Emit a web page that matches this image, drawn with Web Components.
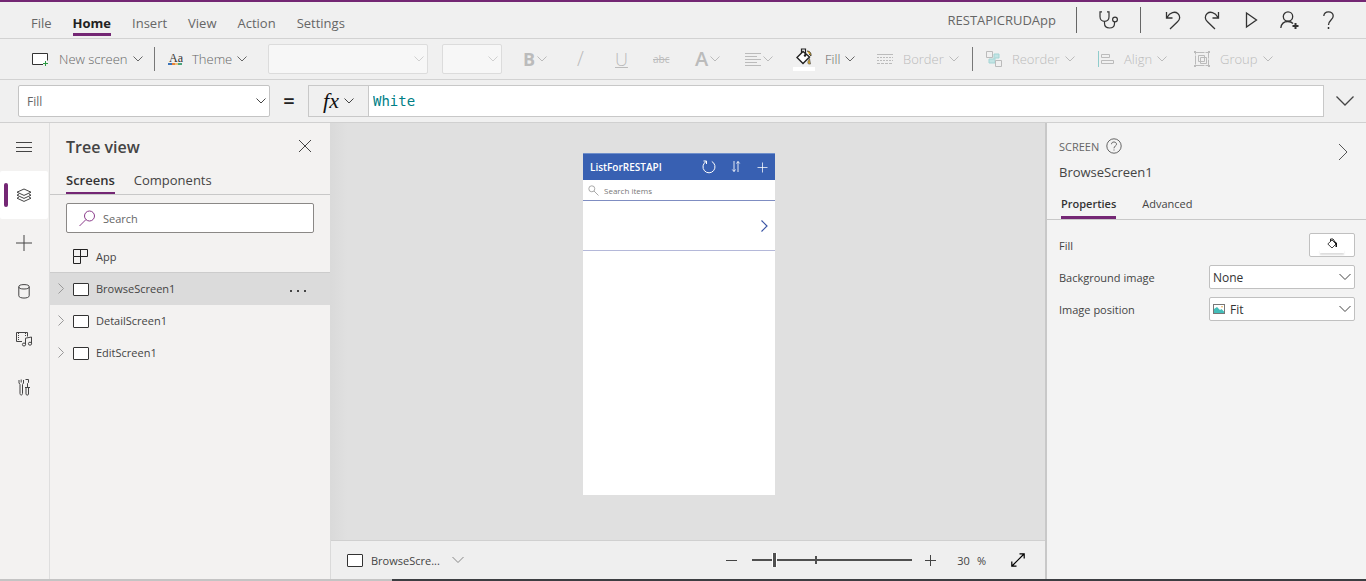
<!DOCTYPE html>
<html lang="en">
<head>
<meta charset="utf-8">
<title>RESTAPICRUDApp</title>
<style>
    body {
        margin: 0;
        font-family: "Open Sans", "Noto Sans", sans-serif;
        font-size: 12px;
        color: #444;
    }
</style>
</head>
<body>
<studio-app></studio-app>
<script>
const icons = {
    chevron: [10, 6, '<path d="M.5.5 5 5 9.500.5"/>'],
    chevronWide: [18, 10, '<path d="M.5.5 9 9l8.500-8.500" stroke-width="1.300"/>'],
    chevronMid: [12, 8, '<path d="M.5 1 6 6.500 11.500 1"/>'],
    right: [6, 11, '<path d="M.5.500 5.500 5.500.5 10.500"/>'],
    rightBig: [10, 18, '<path d="M1 1 9 9 1 17"/>'],
    rightApp: [8, 12, '<path d="M1.500.5 7 6l-5.500 5.500" stroke-width="1.200"/>'],
    close: [12, 12, '<path d="m0 0 12 12M12 0 0 12"/>'],
    menu: [16, 10, '<path d="M0 .5h16M0 5.500h16M0 9.500h16"/>'],
    plus: [16, 16, '<path d="M8 0v16M0 8h16"/>'],
    plusSmall: [12, 12, '<path d="M6.500 1v11M1 6.500h11"/>'],
    plusApp: [12, 12, '<path d="M6.500 1.500v10M1.500 6.500h10" stroke-opacity=".75"/>'],
    minus: [12, 12, '<path d="M1 6.500h11"/>'],
    screen: [17, 13, '<rect x=".5" y=".5" width="15" height="12" rx=".5" fill="#fff" stroke="#333"/>'],
    newScreen: [17, 15, '<path d="M11 12.500H.5v-11h15v7" fill="#fff" stroke="#333"/><path d="M13.500 9v5M11 11.500h5" stroke="#2c9a43"/>'],
    theme: [14, 14, '<text x="1" y="10" font-family="Liberation Serif, serif" font-size="12" fill="#333" stroke="none">Aa</text><g stroke="none"><path d="M0 11h4v2H0z" fill="#3b74b9"/><path d="M4 11h3v2H4z" fill="#e8823a"/><path d="M7 11h3v2H7z" fill="#efc27c"/><path d="M10 11h4v2h-4z" fill="#4aa57e"/></g>'],
    alignText: [16, 13, '<path d="M0 .5h16M0 3.500h12M0 6.500h16M0 9.500h12M0 12.500h16"/>'],
    border: [16, 11, '<path d="M0 .5h16"/><path d="M0 3.500h16M0 6.500h16" stroke-dasharray="2 1"/><path d="M0 9.500h16" stroke-dasharray="3 1"/>'],
    reorder: [16, 16, '<path d="M8 3h5v4H9v5H3V8h5z" fill="#c3e4e4" stroke="#a4d5d5"/><path d="M.5.5h6v6h-6zM9.500 9.500h6v6h-6z" fill="#f0f0f0"/>'],
    align: [16, 16, '<path d="M.5 0v16" stroke="#8fcccc"/><path d="M3.500 3.500h8v3h-8zM3.500 9.500h12v3h-12z"/>'],
    group: [16, 16, '<path d="M1.500 1.500h13v13h-13z" stroke-dasharray="9 1"/><path d="M4.500 4.500h6v6h-6zM6.500 6.500h6v6h-6z"/><path d="M0 0h2v2H0zM14 0h2v2h-2zM0 14h2v2H0zM14 14h2v2h-2z" fill="currentColor" stroke="none"/>'],
    bucket: [17, 17, '<path d="M7 3.500 1 9.500l6 6 6.500-6.500z" stroke="#222" stroke-width="1.400" fill="#fff"/><path d="M5.500 5V1h4v6" stroke="#222" stroke-width="1.200"/><circle cx="9" cy="7.500" r="1.200" fill="#222" stroke="none"/><path d="M11 3c3 0 4.500 2 4 5l-2-2" fill="#e2ae28" stroke="#333" stroke-width=".8"/><path d="M13.500 10.500c-2 3-2 4.500-1 5.500h2z" fill="#e2ae28" stroke="#555" stroke-width=".7"/>'],
    bucketSmall: [11, 11, '<path d="M5 2 .8 6 5 10l4-4z"/><path d="M3.500 3.500V1h2.500l3 4.500" stroke="#222"/><path d="m7 3 3 2v4H8.500V6z" fill="#111" stroke="none"/>'],
    health: [20, 18, '<path d="M3 .8H1v5c0 3 2 4.500 4.500 4.500S10 8.800 10 5.800v-5H8M5.500 10.300v2c0 3 2 4.700 5 4.700 3.200 0 5-2 5-4.500V11" stroke-width="1.200"/><circle cx="16" cy="8.500" r="2.400" stroke-width="1.200"/>'],
    undo: [16, 19, '<path d="M1.500 1v6h6M2 6.500C5 1 10 .2 12.800 2.500c2.900 2.500 2.200 6-.3 8.300L5 18" stroke-width="1.300"/>'],
    redo: [16, 19, '<path d="M14.500 1v6h-6M14 6.500C11 1 6 .2 3.200 2.500.3 5 1 8.500 3.500 10.800L11 18" stroke-width="1.300"/>'],
    play: [13, 16, '<path d="m2.500 1 10 7-10 7z" stroke-width="1.300"/>'],
    user: [19, 19, '<circle cx="8" cy="5.500" r="4.700" stroke-width="1.300"/><path d="M.8 17c.6-4.500 3.400-6.500 7-6.500 2.200 0 4 .7 5.200 2" stroke-width="1.300"/><path d="M15.500 12v6M12.500 15h6" stroke-width="2"/>'],
    question: [11, 19, '<path d="M.8 5C1 2 2.800.8 5.500.8S10.200 2.400 10.200 5c0 4-4.700 4.200-4.700 9" stroke-width="1.300"/><path d="M5.500 16v2" stroke-width="1.500"/>'],
    help: [16, 16, '<circle cx="8" cy="8" r="7.200"/><path d="M5.500 6.200C5.600 4.500 6.600 4 8 4s2.500.8 2.500 2.200C10.500 8 8 8 8 10.300M8 11.500v1"/>'],
    layers: [16, 15, '<path d="m8 1 7 3.200-7 3.200-7-3.200zM3 6 1 7.200l7 3.200 7-3.200L13 6M3 9l-2 1.200 7 3.200 7-3.200L13 9"/>'],
    data: [12, 15, '<ellipse cx="6" cy="2.800" rx="5.200" ry="2.200"/><path d="M.8 2.800v9c0 3 10.400 3 10.400 0v-9"/>'],
    media: [17, 15, '<path d="M6 9.500H.5v-9h11v4"/><path d="M2.500 1v8M9.500 1v4" stroke-dasharray="1 1"/><path d="M9.500 12.500V6.200l6-1.200v6.500"/><ellipse cx="8" cy="12.500" rx="1.600" ry="1.500"/><ellipse cx="14" cy="11.700" rx="1.600" ry="1.500"/>'],
    tools: [12, 17, '<path d="M1 1v3l1 1.500v9c0 2 2.500 2 2.500 0v-9L5.500 4V1M3.200.5v3"/><path d="M7.500.5h3v3l-1 1V8m-2.500.5h5M8 9v6c0 1.500 2.500 1.500 2.500 0V9"/>'],
    app: [15, 15, '<path d="M.5.5h14v7H.500zM.5 7.500v7h7v-14" stroke="#222"/>'],
    search: [17, 17, '<circle cx="10.500" cy="6" r="5"/><path d="m7 9.500-6.500 6.500"/>'],
    searchApp: [11, 11, '<circle cx="3.800" cy="3.800" r="3"/><path d="m6 6 4.500 4.500"/>'],
    more: [16, 4, '<path d="M0 0h2v2H0zM7 0h2v2H7zM14 0h2v2h-2z" fill="currentColor" stroke="none"/>'],
    refresh: [14, 14, '<path d="M9.800 1.500A6 6 0 1 1 4 1.600M1.500 1h3v3" />'],
    sort: [8, 12, '<path d="M2 0v10.500M.3 8.500 2 10.500l1.500-2M6 11V.5M4.500 2.500 6 .5l1.700 2" stroke-opacity=".85"/>'],
    expand: [14, 14, '<path d="M1 13 13 1M8.500.800H13.200V5.500M.8 8.500v4.700h4.700" stroke-width="1.200"/>'],
    picture: [12, 10, '<rect x=".5" y=".5" width="11" height="9" fill="#fff" stroke="#777"/><path d="M1 9V5l3-2 3 3 1.500-1L11 7.500V9z" fill="#43bdb9" stroke="none"/><circle cx="9" cy="2.800" r=".8" fill="#e6a33b" stroke="none"/>']
};

// Small helper: every element gets an open root filled from its own template
function define(name, html, setup) {
    const template = document.createElement('template');
    template.innerHTML = html;
    window.customElements.define(name, class extends HTMLElement {
        constructor() {
            super();
            this._shadowRoot = this.attachShadow({mode: 'open'});
            this._shadowRoot.appendChild(template.content.cloneNode(true));
        }
        connectedCallback() {
            if (setup) setup.call(this, this._shadowRoot);
        }
    });
}

const reset = `
    * { box-sizing: border-box; }
    button, input, select {
        font: inherit;
        color: inherit;
        background: none;
        border: 0;
        border-radius: 0;
        margin: 0;
        padding: 0;
        appearance: none;
        outline: none;
    }
    button { cursor: pointer; }
`;

define('app-icon', `
    <style>
        :host { display: inline-flex; flex: none; }
        svg { display: block; fill: none; stroke: currentColor; overflow: visible; }
    </style>
    <svg aria-hidden="true"></svg>
`, function (root) {
    const [w, h, body] = icons[this.getAttribute('name')];
    const svg = root.querySelector('svg');
    svg.setAttribute('width', w);
    svg.setAttribute('height', h);
    svg.setAttribute('viewBox', `0 0 ${w} ${h}`);
    svg.innerHTML = body;
});

define('menu-bar', `
    <style>
        ${reset}
        :host {
            display: flex;
            justify-content: space-between;
            height: 36px;
            padding: 0 18px 0 31px;
            border-top: 2px solid #742774;
            border-bottom: 1px solid #d2d2d2;
            background: #f0f0f0;
            font-size: 13px;
            color: #666;
        }
        nav { display: flex; align-items: flex-end; gap: 21px; padding-bottom: 2px; }
        a {
            color: inherit;
            text-decoration: none;
            line-height: 20px;
            border-bottom: 3px solid transparent;
        }
        a.on { color: #222; font-weight: 700; border-color: #742774; }
        .right { display: flex; align-items: center; color: #333; }
        .name { color: #666; margin-right: 20px; }
        .sep { width: 1px; height: 26px; background: #666; }
        button { display: grid; place-items: center; width: 39px; height: 36px; }
        .health { width: 63px; }
        .undo { margin-left: 12px; }
    </style>
    <nav>
        <a href="#">File</a><a href="#" class="on">Home</a><a href="#">Insert</a>
        <a href="#">View</a><a href="#">Action</a><a href="#">Settings</a>
    </nav>
    <div class="right">
        <span class="name">RESTAPICRUDApp</span>
        <span class="sep"></span>
        <button class="health" aria-label="App checker"><app-icon name="health"></app-icon></button>
        <span class="sep"></span>
        <button class="undo" aria-label="Undo"><app-icon name="undo"></app-icon></button>
        <button aria-label="Redo"><app-icon name="redo"></app-icon></button>
        <button aria-label="Preview"><app-icon name="play"></app-icon></button>
        <button aria-label="Share"><app-icon name="user"></app-icon></button>
        <button aria-label="Help"><app-icon name="question"></app-icon></button>
    </div>
`);

define('tool-button', `
    <style>
        ${reset}
        :host { display: block; flex: none; color: #666; }
        :host([disabled]) { color: #bbb; }
        button { display: flex; align-items: center; gap: 5px; height: 30px; }
        .label { font-weight: 300; font-size: 13px; padding-left: 5px; }
        :host([glyph]) button { gap: 2px; }
        :host([glyph]) .label { display: none; }
    </style>
    <button><slot name="icon"></slot><span class="label"><slot></slot></span><app-icon name="chevron" class="arrow"></app-icon></button>
`, function (root) {
    root.querySelector('button').disabled = this.hasAttribute('disabled');
    if (this.hasAttribute('plain')) root.querySelector('.arrow').remove();
});

define('tool-bar', `
    <style>
        ${reset}
        :host {
            display: flex;
            align-items: center;
            height: 40px;
            padding-left: 32px;
            background: #f0f0f0;
            border-bottom: 1px solid #d2d2d2;
            overflow: hidden;
        }
        .sep { flex: none; width: 1px; height: 24px; margin-right: 13px; background: #777; }
        .box { flex: none; display: grid; align-items: center; margin-right: 14px; }
        .box > * { grid-area: 1 / 1; }
        .box app-icon { z-index: 1; justify-self: end; margin-right: 4px; color: #d0d0d0; pointer-events: none; }
        select { width: 160px; height: 30px; background: #f7f7f7; border: 1px solid #dcdcdc; border-radius: 2px; opacity: 1; }
        .size select { width: 60px; }
        .size { margin-right: 21px; }
        .bold { font-size: 18px; font-weight: 700; line-height: 20px; }
        .color { font-size: 20px; font-weight: 600; line-height: 20px; }
        .light { font-size: 20px; font-weight: 300; line-height: 20px; }
        .u { text-decoration: underline; font-size: 18px; }
        .strike { font-size: 10px; text-decoration: line-through; }
        .fill { display: flex; flex-direction: column; align-items: center; width: 22px; color: #222; border-bottom: 4px solid #fff; padding-bottom: 2px; }
        .w122 { width: 122px; } .w100 { width: 100px; } .w54 { width: 54px; }
        .w38 { width: 38px; } .w42 { width: 42px; } .w50 { width: 50px; } .w48 { width: 48px; }
        .w84 { width: 84px; } .w95 { width: 95px; } .w112 { width: 112px; } .w96 { width: 96px; }
    </style>
    <tool-button class="w122"><app-icon slot="icon" name="newScreen"></app-icon>New screen</tool-button>
    <span class="sep"></span>
    <tool-button class="w100"><app-icon slot="icon" name="theme"></app-icon>Theme</tool-button>
    <div class="box"><select aria-label="Font" disabled></select><app-icon name="chevron"></app-icon></div>
    <div class="box size"><select aria-label="Font size" disabled></select><app-icon name="chevron"></app-icon></div>
    <tool-button class="w54" glyph disabled><span slot="icon" class="bold">B</span></tool-button>
    <tool-button class="w38" glyph plain disabled><span slot="icon" class="light">/</span></tool-button>
    <tool-button class="w38" glyph plain disabled><span slot="icon" class="light u">U</span></tool-button>
    <tool-button class="w42" glyph plain disabled><span slot="icon" class="strike">abc</span></tool-button>
    <tool-button class="w50" glyph disabled><span slot="icon" class="color">A</span></tool-button>
    <tool-button class="w48" glyph disabled><app-icon slot="icon" name="alignText"></app-icon></tool-button>
    <tool-button class="w84"><span slot="icon" class="fill"><app-icon name="bucket"></app-icon></span>Fill</tool-button>
    <tool-button class="w95" disabled><app-icon slot="icon" name="border"></app-icon>Border</tool-button>
    <span class="sep"></span>
    <tool-button class="w112" disabled><app-icon slot="icon" name="reorder"></app-icon>Reorder</tool-button>
    <tool-button class="w96" disabled><app-icon slot="icon" name="align"></app-icon>Align</tool-button>
    <tool-button disabled><app-icon slot="icon" name="group"></app-icon>Group</tool-button>
`);

define('formula-bar', `
    <style>
        ${reset}
        :host {
            display: flex;
            align-items: center;
            height: 42px;
            padding-left: 18px;
            background: #f0f0f0;
            border-bottom: 1px solid #d0d0d0;
        }
        .prop { display: grid; align-items: center; }
        .prop > * { grid-area: 1 / 1; }
        .prop app-icon { justify-self: end; margin-right: 4px; pointer-events: none; }
        select { width: 252px; height: 32px; padding-left: 8px; background: #fff; border: 1px solid #c4c4c4; border-radius: 2px; color: #666; }
        .eq { width: 38px; text-align: center; font-size: 20px; font-weight: 600; line-height: 28px; color: #222; }
        .fx {
            display: flex;
            align-items: center;
            justify-content: center;
            gap: 5px;
            width: 61px;
            height: 32px;
            border: 1px solid #c8c8c8;
        }
        i { font: italic 22px "Liberation Serif", serif; color: #111; line-height: 24px; }
        .formula {
            flex: 1;
            min-width: 0;
            height: 32px;
            padding-left: 4px;
            background: #fff;
            border: 1px solid #c8c8c8;
            border-left: 0;
            font: 14px "DejaVu Sans Mono", monospace;
            font-size: 14px;
            color: #007f86;
        }
        .more { display: grid; place-items: center; width: 42px; height: 32px; }
    </style>
    <div class="prop">
        <select aria-label="Property"><option>Fill</option></select>
        <app-icon name="chevron"></app-icon>
    </div>
    <span class="eq">=</span>
    <button class="fx"><i>fx</i><app-icon name="chevron"></app-icon></button>
    <input class="formula" aria-label="Formula" value="White" spellcheck="false">
    <button class="more" aria-label="Expand formula bar"><app-icon name="chevronWide"></app-icon></button>
`);

define('side-rail', `
    <style>
        ${reset}
        :host { display: flex; flex-direction: column; flex: none; width: 50px; box-sizing: border-box; background: #f3f2f1; border-right: 1px solid #dedede; color: #444; }
        button { display: grid; place-items: center; width: 48px; height: 48px; }
        .on { background: #fff; border-radius: 2px; grid-template-columns: 4px 1fr 4px; padding: 0 4px; }
        .on::before { content: ""; width: 4px; height: 24px; border-radius: 2px; background: #742774; }
    </style>
    <button aria-label="Menu"><app-icon name="menu"></app-icon></button>
    <button class="on" aria-label="Tree view"><app-icon name="layers"></app-icon></button>
    <button aria-label="Insert"><app-icon name="plus"></app-icon></button>
    <button aria-label="Data"><app-icon name="data"></app-icon></button>
    <button aria-label="Media"><app-icon name="media"></app-icon></button>
    <button aria-label="Advanced tools"><app-icon name="tools"></app-icon></button>
`);

define('tree-row', `
    <style>
        ${reset}
        :host { display: flex; align-items: center; height: 32px; padding: 0 24px 0 8px; color: #444; font-size: 11px; }
        :host([leaf]) { height: 31px; }
        :host([selected]) { height: 33px; box-sizing: border-box; background: #dbdbdb; border-top: 1px solid #ccc; }
        .open { width: 6px; margin-right: 9px; color: #999; }
        .name { flex: 1; padding-left: 6px; line-height: 16px; }
    </style>
    <button class="open" aria-label="Expand"><app-icon name="right"></app-icon></button>
    <slot name="icon"><app-icon name="screen"></app-icon></slot>
    <span class="name"><slot></slot></span>
    <button class="more" aria-label="More"><app-icon name="more"></app-icon></button>
`, function (root) {
    if (this.hasAttribute('leaf')) root.querySelector('.open app-icon').remove();
    if (!this.hasAttribute('selected')) root.querySelector('.more').remove();
});

define('tree-view', `
    <style>
        ${reset}
        :host { display: block; flex: none; width: 280px; background: #f3f2f1; color: #444; }
        header { display: flex; align-items: center; justify-content: space-between; height: 48px; padding: 0 19px 0 16px; }
        h2 { margin: 0; font-size: 16px; font-weight: 600; color: #444; }
        nav { display: flex; align-items: flex-end; gap: 19px; height: 24px; padding-left: 16px; border-bottom: 1px solid #c8c8c8; }
        a { color: inherit; text-decoration: none; font-size: 13px; line-height: 20px; padding-bottom: 2px; border-bottom: 2px solid transparent; }
        a.on { color: #333; font-weight: 600; border-color: #742774; }
        .search { display: flex; align-items: center; gap: 7px; height: 30px; margin: 8px 16px; padding: 0 12px; background: #fff; border: 1px solid #8a8886; border-radius: 2px; font-size: 11px; }
        .search app-icon { color: #8a3a8a; }
        input { flex: 1; min-width: 0; }
        input::placeholder { color: #666; }
        .leaf-icon { margin-right: 2px; }
    </style>
    <header><h2>Tree view</h2><button aria-label="Close"><app-icon name="close"></app-icon></button></header>
    <nav><a href="#" class="on">Screens</a><a href="#">Components</a></nav>
    <label class="search"><app-icon name="search"></app-icon><input placeholder="Search" aria-label="Search"></label>
    <tree-row leaf><app-icon slot="icon" name="app" class="leaf-icon"></app-icon>App</tree-row>
    <tree-row selected>BrowseScreen1</tree-row>
    <tree-row>DetailScreen1</tree-row>
    <tree-row>EditScreen1</tree-row>
`);

define('phone-preview', `
    <style>
        ${reset}
        :host { display: block; width: 192px; height: 342px; background: #fff; }
        header { display: flex; align-items: center; height: 27px; padding: 0 7px; background: #3860b2; border-top: 1px solid #6f8fcb; color: #fff; }
        strong { flex: 1; font-size: 10px; font-weight: 600; }
        header div { display: flex; align-items: center; gap: 16px; }
        .search { display: flex; align-items: center; gap: 5px; height: 21px; padding-left: 5px; border-bottom: 1px solid #7f8dc2; color: #aaa; }
        input { flex: 1; min-width: 0; font-size: 8px; color: #777; }
        input::placeholder { color: #777; }
        .item { display: flex; align-items: center; justify-content: flex-end; height: 50px; padding-right: 7px; border-bottom: 1px solid #b4b8d9; color: #3b55a5; }
    </style>
    <header>
        <strong>ListForRESTAPI</strong>
        <div><app-icon name="refresh"></app-icon><app-icon name="sort"></app-icon><app-icon name="plusApp"></app-icon></div>
    </header>
    <label class="search"><app-icon name="searchApp"></app-icon><input placeholder="Search items" aria-label="Search items"></label>
    <div class="item"><app-icon name="rightApp"></app-icon></div>
`);

define('zoom-bar', `
    <style>
        ${reset}
        :host { display: flex; align-items: center; justify-content: space-between; height: 39px; box-sizing: border-box; padding: 0 20px 0 16px; background: #efefef; border-top: 1px solid #d0d0d0; color: #444; font-size: 11px; }
        .crumb, .zoom { display: flex; align-items: center; }
        .crumb { gap: 7px; }
        .crumb span { min-width: 74px; white-space: nowrap; }
        .crumb .arrow { color: #888; }
        .zoom button { display: flex; }
        input {
            width: 160px;
            height: 16px;
            margin: 0 12px 0 15px;
            background:
                linear-gradient(#505050, #505050) 63px 4px / 2px 8px no-repeat,
                linear-gradient(#505050, #505050) 0 7px / 100% 2px no-repeat;
        }
        input::-webkit-slider-thumb { appearance: none; width: 5px; height: 14px; background: #505050; border: 1px solid #fff; border-width: 0 1px; }
        .value { display: flex; gap: 7px; margin: 0 25px 0 21px; }
        .fit { color: #000; }
    </style>
    <div class="crumb">
        <app-icon name="screen"></app-icon><span>BrowseScre...</span><app-icon name="chevronMid" class="arrow"></app-icon>
    </div>
    <div class="zoom">
        <button aria-label="Zoom out"><app-icon name="minus"></app-icon></button>
        <input type="range" aria-label="Zoom" min="10" max="166" value="30">
        <button aria-label="Zoom in"><app-icon name="plusSmall"></app-icon></button>
        <span class="value"><span>30</span><span>%</span></span>
        <button class="fit" aria-label="Fit to window"><app-icon name="expand"></app-icon></button>
    </div>
`);

define('app-canvas', `
    <style>
        :host { display: flex; flex-direction: column; flex: 1; min-width: 0; border-left: 1px solid #dadada; background: linear-gradient(90deg, #dadada, #e0e0e0 16px); }
        .stage { flex: 1; display: flex; justify-content: center; align-items: flex-start; padding: 30px 18px 30px 0; }
    </style>
    <div class="stage"><phone-preview></phone-preview></div>
    <zoom-bar></zoom-bar>
`);

define('prop-select', `
    <style>
        ${reset}
        :host { display: flex; align-items: center; justify-content: space-between; height: 32px; }
        .box { display: grid; align-items: center; width: 146px; font-size: 12px; }
        .box > * { grid-area: 1 / 1; z-index: 1; pointer-events: none; }
        .box select { z-index: 0; pointer-events: auto; height: 24px; padding-left: 3px; background: #fff; border: 1px solid #c0c0c0; border-radius: 2px; color: #333; }
        :host([picture]) select { padding-left: 20px; }
        .arrow { justify-self: end; margin-right: 4px; }
        slot { display: block; padding-left: 4px; }
    </style>
    <label for="value"></label>
    <div class="box">
        <select id="value"><option></option></select>
        <slot></slot>
        <app-icon name="chevronMid" class="arrow"></app-icon>
    </div>
`, function (root) {
    root.querySelector('label').textContent = this.getAttribute('label');
    root.querySelector('option').textContent = this.getAttribute('value');
});

define('props-panel', `
    <style>
        ${reset}
        :host { display: block; flex: none; width: 321px; box-sizing: border-box; background: #f3f3f3; border-left: 2px solid #c8c8c8; color: #444; font-size: 11px; }
        header { display: flex; justify-content: space-between; padding: 14px 18px 0 12px; }
        .kind { display: flex; align-items: center; gap: 7px; height: 18px; color: #666; }
        .name { font-size: 13px; line-height: 20px; margin-top: 7px; }
        .hide { align-self: flex-start; margin-top: 6px; color: #555; }
        nav { display: flex; align-items: flex-end; gap: 26px; height: 38px; padding-left: 14px; border-bottom: 1px solid #c8c8c8; }
        a { color: inherit; text-decoration: none; line-height: 16px; padding-bottom: 4px; border-bottom: 3px solid transparent; }
        a.on { color: #333; font-weight: 600; border-color: #742774; }
        .list { padding: 9px 11px 0 12px; }
        .row { display: flex; align-items: center; justify-content: space-between; height: 32px; }
        .swatch { display: flex; flex-direction: column; align-items: center; width: 46px; height: 24px; padding-top: 4px; background: #fff; border: 1px solid #c0c0c0; border-radius: 2px; }
        .swatch::after { content: ""; width: 24px; height: 4px; box-shadow: 0 2px 2px #ddd; }
    </style>
    <header>
        <div>
            <div class="kind">SCREEN <app-icon name="help"></app-icon></div>
            <div class="name">BrowseScreen1</div>
        </div>
        <button class="hide" aria-label="Collapse"><app-icon name="rightBig"></app-icon></button>
    </header>
    <nav><a href="#" class="on">Properties</a><a href="#">Advanced</a></nav>
    <div class="list">
        <div class="row"><label for="fill">Fill</label><button id="fill" class="swatch"><app-icon name="bucketSmall"></app-icon></button></div>
        <prop-select label="Background image" value="None"></prop-select>
        <prop-select label="Image position" value="Fit" picture><app-icon name="picture"></app-icon></prop-select>
    </div>
`);

define('studio-app', `
    <style>
        :host { display: flex; flex-direction: column; min-height: 100vh; }
        main { display: flex; flex: 1; }
        .edge { height: 2px; background: linear-gradient(90deg, #c4c4c4 392px, #3c3e42 392px); }
    </style>
    <menu-bar></menu-bar>
    <tool-bar></tool-bar>
    <formula-bar></formula-bar>
    <main>
        <side-rail></side-rail>
        <tree-view></tree-view>
        <app-canvas></app-canvas>
        <props-panel></props-panel>
    </main>
    <div class="edge"></div>
`);
</script>
</body>
</html>
